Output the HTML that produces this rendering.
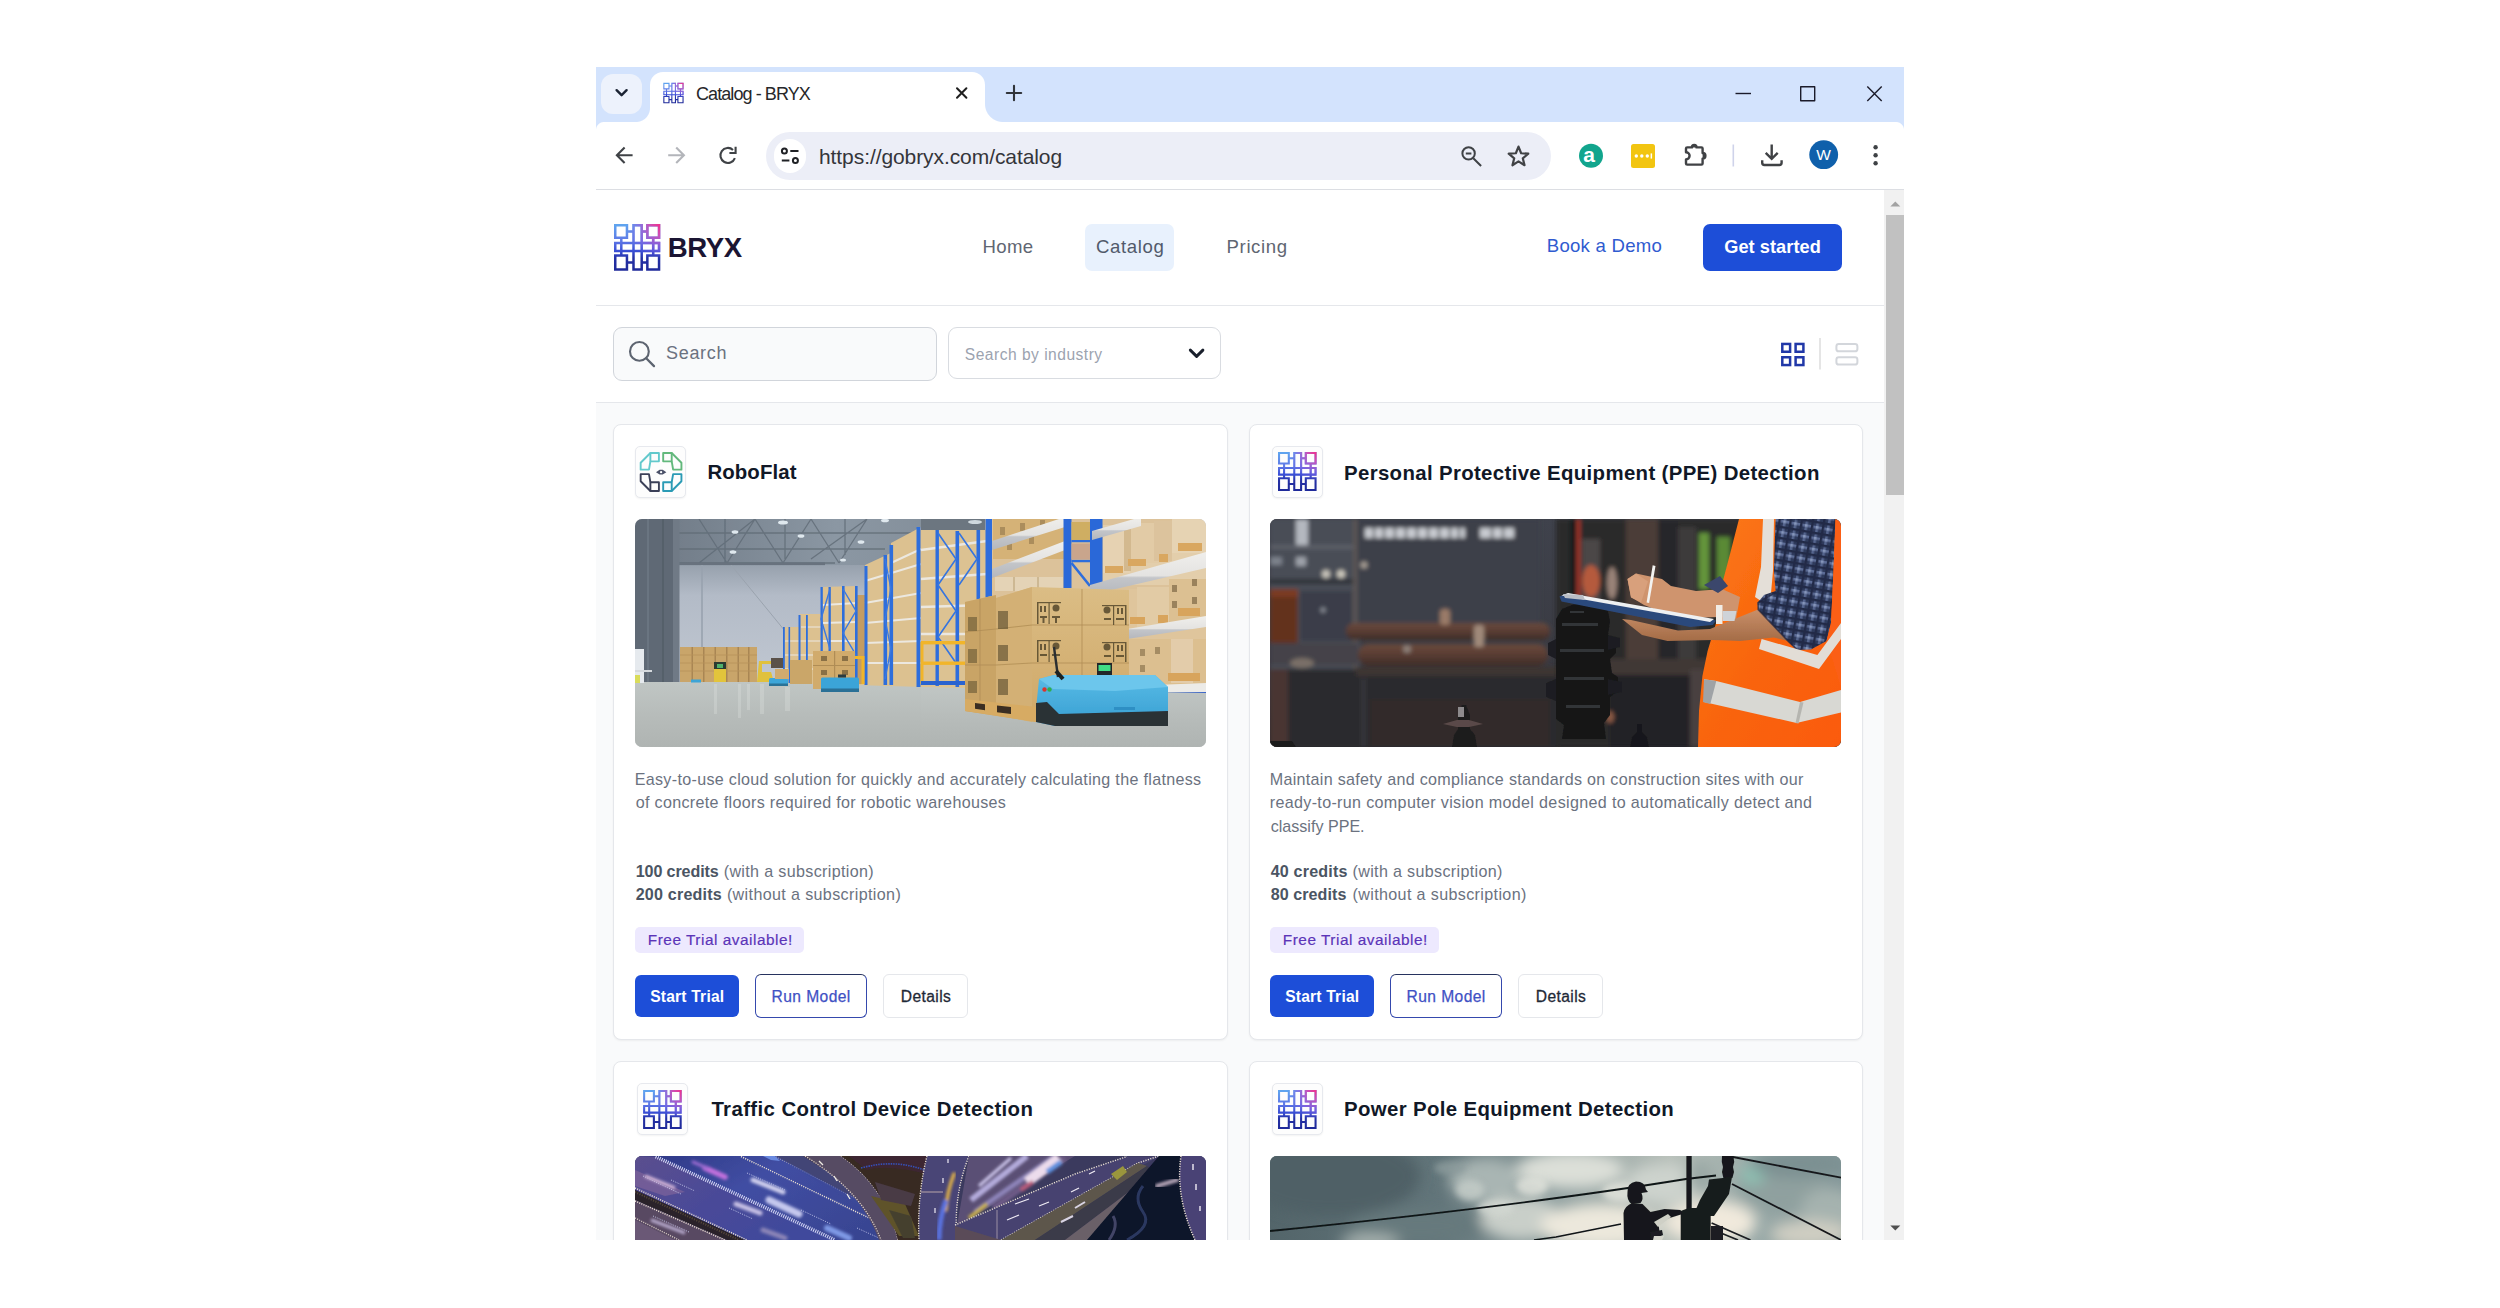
<!DOCTYPE html>
<html lang="en">
<head>
<meta charset="utf-8">
<title>Catalog - BRYX</title>
<style>
*{box-sizing:border-box;margin:0;padding:0}
html,body{width:2500px;height:1308px;background:#fff;overflow:hidden}
body{position:relative;font-family:"Liberation Sans",sans-serif;color:#111827}
.a{position:absolute}
.t{position:absolute;white-space:nowrap;line-height:1}
#win{left:596px;top:67px;width:1308px;height:1173px;overflow:hidden;background:#fff}
/* everything inside #win is positioned in canvas coords via this shifted layer */
#L{left:-596px;top:-67px;width:2500px;height:1308px}
#tabbar{left:596px;top:67px;width:1308px;height:55px;background:#d3e3fd}
#tabsearch{left:601px;top:74px;width:41px;height:40px;border-radius:12px;background:#edf2fc}
#tab{left:650px;top:72px;width:335px;height:50px;background:#fff;border-radius:13px 13px 0 0}
.foot{width:14px;height:14px;top:108px;background:radial-gradient(circle at var(--cx) 0,#d3e3fd 13.5px,#fff 14.5px)}
#toolbar{left:596px;top:122px;width:1308px;height:67px;background:#fff}
#tbline{left:596px;top:189px;width:1308px;height:1px;background:#dcdee3}
#omni{left:766px;top:132px;width:785px;height:48px;border-radius:24px;background:#eceef7}
#siteinfo{left:774px;top:139px;width:32px;height:34px;border-radius:17px;background:#fff}
#page{left:596px;top:190px;width:1288px;height:1050px;background:#f9fafb}
#hdr{left:596px;top:190px;width:1288px;height:115px;background:#fff}
#hdrline{left:596px;top:305px;width:1288px;height:1px;background:#e5e7eb}
#bar{left:596px;top:306px;width:1288px;height:96px;background:#fff}
#barline{left:596px;top:402px;width:1288px;height:1px;background:#e5e7eb}
#sbtrack{left:1884px;top:190px;width:20px;height:1050px;background:#f1f1f1}
#sbthumb{left:1886px;top:215px;width:18px;height:280px;background:#c1c1c1}
.card{position:absolute;background:#fff;border:1px solid #e5e7eb;border-radius:8px;box-shadow:0 1px 2px rgba(0,0,0,.05)}
.ibox{position:absolute;width:51px;height:52px;border:1px solid #e7e9ee;border-radius:5px;background:#fdfdfd;box-shadow:0 1px 2px rgba(0,0,0,.05)}
.ph{position:absolute;width:571px;border-radius:7px;overflow:hidden}
.ph svg{display:block}
.h3{font-weight:700;color:#111827;font-size:20.4px}
.d{color:#6b7280;font-size:16.1px}
.b{font-weight:700;color:#4b5563}
.badge{position:absolute;height:26px;border-radius:5px;background:#ede9fe}
.btn{position:absolute;border-radius:6px}
.nav{font-size:18.6px;color:#5f6672}
</style>
</head>
<body>
<svg width="0" height="0" style="position:absolute">
<defs>
<linearGradient id="mg1" x1="0" y1="0" x2="0" y2="1"><stop offset="0" stop-color="#5fa4ef"/><stop offset=".35" stop-color="#5f78e6"/><stop offset=".58" stop-color="#3a4fd6"/><stop offset=".75" stop-color="#2430a4"/><stop offset="1" stop-color="#1f2a9a"/></linearGradient>
<radialGradient id="mg2" gradientUnits="userSpaceOnUse" cx="46" cy="1" r="34"><stop offset="0" stop-color="#f0308c"/><stop offset=".3" stop-color="#d24bb4" stop-opacity=".95"/><stop offset=".7" stop-color="#8f5fe0" stop-opacity=".55"/><stop offset="1" stop-color="#7060e0" stop-opacity="0"/></radialGradient>
<symbol id="bryxmark" viewBox="0 0 46.3 46.75" overflow="visible">
<path d="M1.25 1.25h11.7v12.6H1.25zM33.35 1.25h11.7v12.6h-11.7zM1.25 31.4h11.7v14.1H1.25zM33.35 31.4h11.7v14.1h-11.7zM19.5 1.25h8.2v44.25h-8.2zM1.25 19.1h43.8v8H1.25zM13 7.4h6.5M27.7 7.4h5.6M13 38.4h6.5M27.7 38.4h5.6M7.3 13.8v5.3M39.2 13.8v5.3M7.3 27.1v4.3M39.2 27.1v4.3M7.3 19.1v8M39.2 19.100v8" fill="none" stroke="url(#mg1)" stroke-width="2.5" stroke-linecap="butt" stroke-linejoin="miter"/>
<path d="M1.25 1.25h11.7v12.6H1.25zM33.35 1.25h11.7v12.6h-11.7zM1.25 31.4h11.7v14.1H1.25zM33.35 31.4h11.7v14.1h-11.7zM19.5 1.25h8.2v44.25h-8.2zM1.25 19.1h43.8v8H1.25zM13 7.4h6.5M27.7 7.4h5.6M13 38.4h6.5M27.7 38.4h5.6M7.3 13.8v5.3M39.2 13.8v5.3M7.3 27.1v4.3M39.2 27.1v4.3M7.3 19.1v8M39.2 19.100v8" fill="none" stroke="url(#mg2)" stroke-width="2.5" stroke-linecap="butt" stroke-linejoin="miter"/>
</symbol>
</defs></svg>
<div id="win" class="a"><div id="L" class="a">

<!-- ===== browser chrome ===== -->
<div id="tabbar" class="a"></div>
<div id="tab" class="a"></div>
<div class="a foot" style="left:636px;--cx:0px"></div>
<div class="a" style="left:985px;top:104px;width:18px;height:18px;background:radial-gradient(circle at 18px 0,#d3e3fd 17.5px,#fff 18.5px)"></div>
<div id="tabsearch" class="a"></div>
<div id="toolbar" class="a"></div>
<div id="tbline" class="a"></div>
<div class="a" style="left:596px;top:122px;width:8px;height:8px;background:radial-gradient(circle at 8px 8px,#fff 7.5px,#d3e3fd 8.5px)"></div>
<div class="a" style="left:1896px;top:122px;width:8px;height:8px;background:radial-gradient(circle at 0 8px,#fff 7.5px,#d3e3fd 8.5px)"></div>
<div id="omni" class="a"></div>
<div id="siteinfo" class="a"></div>
<span id="tx_tab" class="t" style="left:696.00px;top:85.00px;font-size:18px;color:#26272a;letter-spacing:-0.924px">Catalog - BRYX</span>
<span id="tx_url" class="t" style="left:819.00px;top:146.30px;font-size:21px;color:#34353a;letter-spacing:-0.080px">https://gobryx.com/catalog</span>
<svg class="a" style="left:596px;top:67px" width="1308" height="123" viewBox="596 67 1308 123" fill="none" stroke-linecap="round" stroke-linejoin="round">
<defs>
<linearGradient id="lg" x1="0" y1="0" x2="1" y2="1"><stop offset="0" stop-color="#63b8f2"/><stop offset=".33" stop-color="#b14fd0"/><stop offset=".36" stop-color="#7a63e0"/><stop offset=".62" stop-color="#3a55d8"/><stop offset="1" stop-color="#1d2a9c"/></linearGradient>
</defs>
<!-- tab search chevron -->
<path d="M616.6 90.2l5 5 5-5" stroke="#1b2333" stroke-width="2.4"/>
<!-- favicon -->
<use href="#bryxmark" x="663.3" y="82.800" width="20.3" height="20.5"/>
<!-- tab close -->
<path d="M957 88.3l9.4 9.4M966.4 88.3l-9.4 9.4" stroke="#1f1f1f" stroke-width="2"/>
<!-- new tab -->
<path d="M1006.8 93h14.4M1014 85.8v14.4" stroke="#30343a" stroke-width="2.1"/>
<!-- window controls -->
<path d="M1735.5 93.5h15.5" stroke="#1b1b2a" stroke-width="1.4" stroke-linecap="butt"/>
<rect x="1800.7" y="86.7" width="14" height="14" stroke="#1b1b2a" stroke-width="1.4"/>
<path d="M1867.3 86.5l14.4 14.4M1881.7 86.5l-14.4 14.4" stroke="#1b1b2a" stroke-width="1.4" stroke-linecap="butt"/>
<!-- back / forward / reload -->
<path d="M632.6 155.3h-15.4M624.6 147.6l-7.7 7.7 7.7 7.7" stroke="#3f4246" stroke-width="2.1" stroke-linecap="butt" stroke-linejoin="miter"/>
<path d="M668.2 155.3h15.4M676.2 147.6l7.7 7.7-7.7 7.7" stroke="#b3b5ba" stroke-width="2.1" stroke-linecap="butt" stroke-linejoin="miter"/>
<path d="M734.9 158.1a7.5 7.5 0 1 1-1.9-8.2" stroke="#3f4246" stroke-width="2.1" stroke-linecap="butt"/>
<path d="M735.6 146.8v6.2h-6.2" stroke="#3f4246" stroke-width="2.1" stroke-linecap="butt" stroke-linejoin="miter"/>
<!-- tune / site info -->
<circle cx="784.4" cy="151.1" r="2.5" stroke="#1f2125" stroke-width="2"/>
<path d="M790.3 151.1h8.2M781.8 160.5h7.6" stroke="#1f2125" stroke-width="2" stroke-linecap="butt"/>
<circle cx="795.4" cy="160.5" r="2.5" stroke="#1f2125" stroke-width="2"/>
<!-- zoom-out -->
<circle cx="1468.6" cy="153.4" r="6.2" stroke="#3f4246" stroke-width="2"/>
<path d="M1465.8 153.4h5.6M1473.3 158.2l7.8 7.8" stroke="#3f4246" stroke-width="2" stroke-linecap="butt"/>
<!-- star -->
<path d="M1518.50 146.60L1521.15 153.26L1528.30 153.72L1522.78 158.29L1524.55 165.23L1518.50 161.40L1512.45 165.23L1514.22 158.29L1508.70 153.72L1515.85 153.26Z" stroke="#404245" stroke-width="2.2" stroke-linejoin="round"/>
<!-- green a -->
<circle cx="1591" cy="155.8" r="12" fill="#12a58d"/>
<!-- yellow box -->
<rect x="1631" y="144" width="24" height="24" rx="2.5" fill="#f2c511"/>
<circle cx="1636.3" cy="156" r="1.7" fill="#fff"/><circle cx="1641.8" cy="156" r="1.7" fill="#fff"/><circle cx="1647.3" cy="156" r="1.7" fill="#fff"/><rect x="1650.6" y="153.4" width="1.5" height="5.2" fill="#fff"/>
<!-- puzzle -->
<path d="M1687.2 147.4H1691.9A2.300 2.500 0 0 1 1696.5 147.4H1701.4a1.200 1.200 0 0 1 1.200 1.200V153A2.800 2.800 0 0 1 1702.6 158.600V163.400a1.200 1.200 0 0 1-1.200 1.200H1687.2a1.200 1.200 0 0 1-1.200-1.200V159.400A3.600 3.600 0 0 0 1686 152.200V148.600a1.200 1.200 0 0 1 1.200-1.200z" stroke="#404245" stroke-width="2.400" stroke-linejoin="round"/>
<path d="M1691.900 147.400A2.300 2.500 0 0 1 1696.500 147.400zM1702.600 153A2.800 2.800 0 0 1 1702.600 158.600z" fill="#404245" stroke="none"/>
<!-- separator -->
<path d="M1733.3 144.5v22" stroke="#cfd3ea" stroke-width="1.6" stroke-linecap="butt"/>
<!-- download -->
<path d="M1771.7 144.4v14.2M1765.700 152.800l6 6 6-6" stroke="#404245" stroke-width="2.4" stroke-linecap="butt" stroke-linejoin="miter"/>
<path d="M1762.2 160.200v2.600a2.200 2.200 0 0 0 2.200 2.200h15a2.200 2.200 0 0 0 2.200-2.200v-2.600" stroke="#404245" stroke-width="2.4" stroke-linecap="butt"/>
<!-- avatar -->
<circle cx="1823.7" cy="154.7" r="14.4" fill="#0f60ab"/>
<!-- menu -->
<circle cx="1875.6" cy="147.2" r="2.2" fill="#3f4246"/><circle cx="1875.6" cy="155.2" r="2.2" fill="#3f4246"/><circle cx="1875.6" cy="163.300" r="2.2" fill="#3f4246"/>
</svg>
<span class="t" style="left:1583.2px;top:143.5px;font-size:21px;font-weight:700;color:#fff">a</span>
<span class="t" style="left:1816.3px;top:146.6px;font-size:15.5px;color:#fff">W</span>

<!-- ===== page ===== -->
<div id="page" class="a"></div>
<div id="hdr" class="a"></div>
<div id="hdrline" class="a"></div>
<div id="bar" class="a"></div>
<div id="barline" class="a"></div>
<div id="sbtrack" class="a"></div>
<div id="sbthumb" class="a"></div>
<svg class="a" style="left:1884px;top:190px" width="20" height="1050" viewBox="1884 190 20 1050">
<path d="M1890.300 206.500l5-5 5 5z" fill="#a3a3a3"/>
<path d="M1890.300 1225.500l5 5 5-5z" fill="#505050"/>
</svg>

<!-- header -->
<svg class="a" style="left:614px;top:224px;overflow:visible" width="46.3" height="46.75"><use href="#bryxmark" width="46.3" height="46.75"/></svg>
<span id="tx_bryx" class="t" style="left:667.80px;top:234.21px;font-size:27.6px;font-weight:700;color:#1b1533;letter-spacing:-0.400px">BRYX</span>
<span id="tx_home" class="t nav" style="left:982.60px;top:237.91px;letter-spacing:0.334px">Home</span>
<div class="a" style="left:1085px;top:224px;width:89px;height:47px;border-radius:7px;background:#e8f1fd"></div>
<span id="tx_cat" class="t nav" style="left:1096.00px;top:237.91px;color:#515a6b;letter-spacing:0.633px">Catalog</span>
<span id="tx_pri" class="t nav" style="left:1226.60px;top:237.91px;letter-spacing:0.601px">Pricing</span>
<span id="tx_demo" class="t" style="left:1546.80px;top:237.11px;font-size:18.6px;color:#2f5bd0;letter-spacing:0.240px">Book a Demo</span>
<div class="a" style="left:1703px;top:224px;width:139px;height:47px;border-radius:7px;background:#1d4ed8"></div>
<span id="tx_get" class="t" style="left:1724.20px;top:237.50px;font-size:18.2px;font-weight:700;color:#fff;letter-spacing:0.060px">Get started</span>

<!-- search bar -->
<div class="a" style="left:613px;top:327px;width:324px;height:54px;border-radius:9px;border:1px solid #d1d5db;background:#f9fafb"></div>
<span id="tx_search" class="t" style="left:666.00px;top:344.11px;font-size:18px;color:#6b7280;letter-spacing:0.680px">Search</span>
<div class="a" style="left:948px;top:327px;width:273px;height:52px;border-radius:9px;border:1px solid #d9dce1;background:#fff"></div>
<span id="tx_ind" class="t" style="left:964.80px;top:346.50px;font-size:15.6px;color:#9ca3af;letter-spacing:0.483px">Search by industry</span>
<svg class="a" style="left:596px;top:306px" width="1288" height="96" viewBox="596 306 1288 96" fill="none">
<circle cx="639.4" cy="351.4" r="9.4" stroke="#5d6470" stroke-width="2.1"/>
<path d="M646.2 358.2l7.800 7.900" stroke="#5d6470" stroke-width="2.3" stroke-linecap="round"/>
<path d="M1190.300 350.100l6.300 6.300 6.300-6.300" stroke="#1a202c" stroke-width="2.900" stroke-linecap="round" stroke-linejoin="round"/>
<g stroke="#2138a8" stroke-width="2.5">
<rect x="1782.3" y="343.95" width="7.800" height="7.800"/><rect x="1795.600" y="343.950" width="7.800" height="7.800"/>
<rect x="1782.300" y="357.250" width="7.800" height="7.800"/><rect x="1795.600" y="357.250" width="7.800" height="7.800"/>
</g>
<path d="M1820 338v31.500" stroke="#e3e3e3" stroke-width="1.800"/>
<rect x="1836.400" y="344.100" width="21" height="7.200" rx="2.400" stroke="#d3d6db" stroke-width="2"/>
<rect x="1836.400" y="357.300" width="21" height="7.300" rx="2.400" stroke="#d3d6db" stroke-width="2"/>
</svg>


<!-- ===== cards ===== -->
<div class="card" style="left:613px;top:424px;width:615px;height:616px"></div>
<div class="card" style="left:1249px;top:424px;width:614px;height:616px"></div>
<div class="card" style="left:613px;top:1061px;width:615px;height:616px"></div>
<div class="card" style="left:1249px;top:1061px;width:614px;height:616px"></div>

<div class="ibox" style="left:635px;top:446px"></div>
<div class="ibox" style="left:1272px;top:446px"></div>
<div class="ibox" style="left:637px;top:1083px"></div>
<div class="ibox" style="left:1272px;top:1083px"></div>
<svg class="a" style="left:630px;top:440px;overflow:visible" width="62" height="62" viewBox="0 0 1308 1308" fill="none" stroke-width="40" stroke-linejoin="round">
<defs><linearGradient id="rg1" x1="0" y1="0" x2="1" y2="0"><stop offset="0" stop-color="#69cfd0"/><stop offset="1" stop-color="#52bcc6"/></linearGradient></defs>
<g stroke="#62c9cc"><path d="M430 275H610V450H430Z"/><path d="M430 275L225 480V625H400L430 450"/></g>
<g stroke="#62b87c"><path d="M700 275H880V450H700Z"/><path d="M880 275L1085 480V625H910L880 450"/></g>
<g stroke="#3b4058"><path d="M430 890H610V1075H430Z"/><path d="M430 1075L225 870V720H400L430 890"/></g>
<g stroke="#2b9bb5"><path d="M700 890H880V1075H700Z"/><path d="M880 1075L1085 870V720H910L880 890"/></g>
<path d="M548 678L625 626H690L768 678L690 730H625Z" fill="#4a5068" stroke="none"/><circle cx="656" cy="678" r="24" fill="#fff" stroke="none"/>
</svg>
<svg class="a" style="left:1278.2px;top:452.4px;overflow:visible" width="38.6" height="39"><use href="#bryxmark" width="38.6" height="39"/></svg>
<svg class="a" style="left:642.8px;top:1089.8px;overflow:visible" width="38.8" height="39"><use href="#bryxmark" width="38.800" height="39"/></svg>
<svg class="a" style="left:1278.2px;top:1089.8px;overflow:visible" width="38.6" height="39"><use href="#bryxmark" width="38.600" height="39"/></svg>

<span id="tx_t1" class="t h3" style="left:707.40px;top:462.41px;letter-spacing:0.112px">RoboFlat</span>
<span id="tx_t2" class="t h3" style="left:1344.00px;top:462.50px;letter-spacing:0.349px">Personal Protective Equipment (PPE) Detection</span>
<span id="tx_t3" class="t h3" style="left:711.40px;top:1099.21px;letter-spacing:0.394px">Traffic Control Device Detection</span>
<span id="tx_t4" class="t h3" style="left:1344.00px;top:1099.21px;letter-spacing:0.352px">Power Pole Equipment Detection</span>

<div id="ph1" class="ph" style="left:635px;top:519px;height:228px;background:#b9bec0"><svg width="571" height="228" viewBox="0 0 571 228" preserveAspectRatio="none">
<defs>
<linearGradient id="p1fl" x1="0" y1="0" x2="0" y2="1"><stop offset="0" stop-color="#c0c6c4"/><stop offset=".5" stop-color="#b7bcba"/><stop offset="1" stop-color="#afb4b2"/></linearGradient>
<linearGradient id="p1wl" x1="0" y1="0" x2="0" y2="1"><stop offset="0" stop-color="#97a1ad"/><stop offset=".25" stop-color="#b3bbc7"/><stop offset="1" stop-color="#c1c8d2"/></linearGradient>
<linearGradient id="p1cl" x1="0" y1="0" x2="1" y2="0"><stop offset="0" stop-color="#727d89"/><stop offset=".5" stop-color="#8b97a3"/><stop offset="1" stop-color="#7f8a95"/></linearGradient>
<linearGradient id="p1bx" x1="0" y1="0" x2="0" y2="1"><stop offset="0" stop-color="#dbbd85"/><stop offset="1" stop-color="#cfa868"/></linearGradient>
<linearGradient id="p1rb" x1="0" y1="0" x2="0" y2="1"><stop offset="0" stop-color="#59bbe6"/><stop offset="1" stop-color="#379fd2"/></linearGradient>
<linearGradient id="p1sh" x1="0" y1="0" x2="0" y2="1"><stop offset="0" stop-color="#f0efec"/><stop offset=".55" stop-color="#e4e3e1"/><stop offset=".6" stop-color="#c3c5c9"/><stop offset="1" stop-color="#b4b7bd"/></linearGradient>
<filter id="p1b"><feGaussianBlur stdDeviation=".6"/></filter>
</defs>
<g filter="url(#p1b)">
<rect width="571" height="228" fill="#b9c0ca"/>
<!-- ceiling -->
<rect x="36" y="0" width="330" height="47" fill="url(#p1cl)"/>
<g stroke="#5f6a76" stroke-width="1.3" fill="none" opacity=".8">
<path d="M44 14H290M44 30H250M44 44H200M64 0L92 44M92 44L120 0M120 0L148 44M148 44L176 0M176 0L204 44M204 44L232 0M90 0V44M150 0V40M210 0V36M120 0L64 44M232 0L176 40"/>
</g>
<g fill="#dfe8ee"><ellipse cx="100" cy="13" rx="3.4" ry="1.8"/><ellipse cx="98" cy="33" rx="3.4" ry="1.8"/><ellipse cx="148" cy="3.500" rx="5" ry="2"/><ellipse cx="166" cy="17" rx="3.400" ry="1.800"/><ellipse cx="208" cy="41" rx="3" ry="1.600"/><ellipse cx="226" cy="23" rx="3.400" ry="1.800"/><ellipse cx="250" cy="1.500" rx="4" ry="1.800"/></g>
<!-- back wall -->
<rect x="44" y="46" width="190" height="122" fill="url(#p1wl)"/>
<rect x="44" y="43.5" width="146" height="2.6" fill="#67727e"/>
<rect x="66.200" y="46" width="1.600" height="118" fill="#98a2ae"/>
<path d="M96 46L150 112" stroke="#9aa3ae" stroke-width="1" fill="none"/>
<!-- pillar -->
<rect x="0" y="0" width="38" height="166" fill="#5f6975"/>
<rect x="12" y="0" width="2" height="166" fill="#6b7581"/><rect x="27" y="0" width="2" height="166" fill="#55606b"/>
<rect x="38" y="0" width="6.500" height="166" fill="#707a86"/>
<!-- floor -->
<path d="M0 163H150L571 170V228H0Z" fill="url(#p1fl)"/>
<g fill="#dfe3e0" opacity=".32"><rect x="79" y="165" width="3" height="30"/><rect x="103" y="165" width="3" height="34"/><rect x="112" y="165" width="3" height="26"/><rect x="125" y="165" width="4" height="30"/><rect x="150" y="168" width="5" height="24"/></g>
<!-- white object far left -->
<rect x="0" y="130" width="9" height="34" fill="#e6eaee"/><rect x="0" y="151" width="17" height="2" fill="#d6dade"/><rect x="0" y="156" width="5" height="8" fill="#d9dc5a"/>
<!-- back boxes -->
<rect x="45" y="128" width="77" height="35" fill="#c9a56a"/>
<g fill="#a98652"><rect x="56.500" y="128" width="1.500" height="35"/><rect x="68" y="128" width="1.500" height="35"/><rect x="79.500" y="128" width="1.500" height="35"/><rect x="91" y="128" width="1.500" height="35"/><rect x="102.500" y="128" width="1.500" height="35"/><rect x="113" y="128" width="1.500" height="35"/></g>
<g stroke="#b8935a" stroke-width=".8"><path d="M45 136H122M45 144H122M45 152H122"/></g>
<!-- forklifts -->
<rect x="79" y="143" width="12" height="8" fill="#2c3a32"/><rect x="79" y="150" width="12" height="13" fill="#e2c43a"/><rect x="82" y="145" width="6" height="4" fill="#4fb06a"/>
<path d="M124 142h12v3h-9v8h9l3 10h-17z" fill="#e0c13c"/><rect x="136" y="139" width="14" height="10" fill="#5a5148"/>
<rect x="56" y="160.500" width="10" height="3" fill="#3da4d6"/>
<!-- rack wedge -->
<path d="M148 108L165 108 165 95 187 95 187 68 222 67 222 76 230 76 230 46 256 34 256 24 286 8 360 0 360 170 148 164Z" fill="#dcc190"/>
<path d="M222 76h8V165h-8z" fill="#c39c63"/>
<!-- shelf lines (light) in far racks -->
<g stroke="#ece8e0" stroke-width="2" fill="none"><path d="M230 62L286 45M230 84L286 74M230 104L286 99M230 124L286 122M230 144L286 144M188 86L222 84M188 104L222 103M188 122L222 122M188 140L222 140M256 44L286 30"/></g>
<g stroke="#ece8e0" stroke-width="1.200" fill="none"><path d="M150 122H186M150 136H186M150 150H186M166 108H186"/></g>
<!-- blue uprights far -->
<g fill="#2f6edb"><rect x="148" y="108" width="1.800" height="56"/><rect x="153.500" y="108" width="1.600" height="56"/><rect x="163.500" y="96" width="2" height="68"/><rect x="171" y="96" width="1.800" height="68"/><rect x="185.500" y="68" width="2.300" height="97"/><rect x="193.500" y="68" width="2.300" height="97"/><rect x="207" y="67" width="2.600" height="98"/><rect x="220" y="67" width="2.600" height="98"/><rect x="229.500" y="47" width="3" height="119"/><rect x="248.500" y="36" width="3.600" height="130"/><rect x="254.500" y="26" width="3.600" height="140"/><rect x="281.500" y="8" width="4" height="160"/></g>
<g stroke="#3a78e0" stroke-width="1.400" fill="none"><path d="M208 70L221 92L208 114L221 136L208 158M195 70L186 100L195 130M250 40L256 70L250 100L256 130L250 160"/></g>
<!-- mid racks right of 286 -->
<rect x="286" y="0" width="75" height="170" fill="#dcc292"/>
<g stroke="#ebe7df" stroke-width="2.400" fill="none"><path d="M286 31L352 22M286 60L352 55M286 88L352 86M286 115L352 115"/></g>
<g fill="#2d6ddc"><rect x="300.500" y="9" width="3.400" height="158"/><rect x="320.500" y="12" width="3.600" height="156"/><rect x="341.500" y="8" width="3.600" height="74"/><rect x="350.500" y="0" width="7" height="80"/></g>
<g stroke="#3574e0" stroke-width="1.600" fill="none"><path d="M303 14L321 40L303 66L321 92L303 118L321 144M324 14L342 40L324 66"/></g>
<rect x="286" y="0" width="64" height="11" fill="#6c7680"/><ellipse cx="340" cy="3" rx="7" ry="2" fill="#cfd8de"/>
<!-- yellow barrier -->
<g fill="#f1b52b"><rect x="286" y="122" width="45" height="3.400"/><rect x="286" y="142.500" width="45" height="3.400"/></g><path d="M287 123v42" stroke="#f1b52b" stroke-width="3"/>
<rect x="286" y="162" width="46" height="4" fill="#2b63cf"/>
<!-- right shelves region -->
<rect x="357" y="0" width="214" height="172" fill="#dcc29a"/>
<!-- top-left boxes (behind) -->
<rect x="358" y="0" width="72" height="40" fill="#d5b277"/>
<g fill="#8a6f45" opacity=".55"><rect x="365" y="8" width="5" height="8"/><rect x="385" y="4" width="5" height="8"/><rect x="405" y="1" width="5" height="8"/><rect x="372" y="24" width="5" height="7"/><rect x="394" y="18" width="5" height="7"/></g>
<path d="M357 22L430 -2V8L357 31Z" fill="url(#p1sh)"/>
<path d="M357 50L430 22V31L357 59Z" fill="url(#p1sh)"/>
<rect x="360" y="58" width="68" height="14" fill="#e4d3b6"/><rect x="378" y="58" width="2" height="14" fill="#cdb893"/><rect x="402" y="58" width="2" height="14" fill="#cdb893"/>
<!-- blue big uprights -->
<path d="M428.500 0h8v69h-8zM455 0h12.500v69H455z" fill="#2b68d8"/>
<path d="M436.500 22H455M436.500 42H455M436.500 44L455 67" stroke="#2f6edc" stroke-width="2.600" fill="none"/>
<rect x="436.500" y="24.500" width="18.500" height="16" fill="#c9a58c"/><rect x="436.500" y="3" width="18.500" height="18" fill="#cfae62"/>
<!-- right boxes upper -->
<rect x="468" y="6" width="103" height="60" fill="#e3ceab"/>
<rect x="468" y="12" width="27" height="42" fill="#e6d2b2"/><rect x="495" y="4" width="42" height="40" fill="#e2cba6"/><rect x="537" y="0" width="34" height="34" fill="#e6d3b3"/>
<rect x="489" y="10" width="7" height="42" fill="#d3b98f"/><rect x="519" y="2" width="18" height="40" fill="#dcc39d"/>
<g fill="#d9a760"><rect x="470" y="47" width="18" height="7"/><rect x="493" y="40" width="18" height="7"/><rect x="524" y="35" width="9" height="8"/><rect x="543" y="24" width="24" height="8"/></g>
<path d="M457 12L506 -2V7L457 21Z" fill="url(#p1sh)"/>
<path d="M455 66L571 33V49L455 76Z" fill="url(#p1sh)"/>
<!-- right boxes lower -->
<rect x="494" y="70" width="77" height="100" fill="#dfc59c"/>
<rect x="502" y="68" width="32" height="44" fill="#e2cba5"/><rect x="534" y="60" width="37" height="46" fill="#dcc092"/>
<g fill="#6f5a38" opacity=".6"><rect x="537" y="66" width="5" height="7"/><rect x="557" y="60" width="5" height="7"/><rect x="537" y="82" width="5" height="7"/><rect x="557" y="78" width="5" height="7"/></g>
<g fill="#d8a45c"><rect x="495" y="98" width="15" height="7"/><rect x="523" y="96" width="10" height="8"/><rect x="543" y="89" width="22" height="8"/></g>
<path d="M492 110L571 97V108L492 120Z" fill="url(#p1sh)"/>
<rect x="494" y="120" width="77" height="48" fill="#dcbf90"/>
<rect x="536" y="120" width="22" height="44" fill="#e3ccaa"/>
<g fill="#6f5a38" opacity=".5"><rect x="505" y="130" width="5" height="7"/><rect x="520" y="128" width="5" height="7"/><rect x="505" y="146" width="5" height="7"/></g>
<g fill="#d8a45c"><rect x="533" y="154" width="32" height="8"/></g>
<path d="M520 166L571 164V176L520 173Z" fill="#ecebe8"/>
<rect x="523" y="173" width="48" height="5" fill="#3a64c8"/>
<!-- floor right -->
<path d="M286 168L571 174V228H286Z" fill="url(#p1fl)"/>
<!-- front box stack -->
<path d="M330 83L361 76 361 79 397 68 494 71 494 196 401 203 330 192Z" fill="url(#p1bx)"/>
<path d="M330 83L361 76V196L330 192Z" fill="#c9a466"/>
<path d="M361 79L397 68V203L361 196Z" fill="#d3b074"/>
<g stroke="#b08d55" stroke-width="1" fill="none" opacity=".8"><path d="M330 113L361 110L397 106H494M330 146L361 146L397 144H494M447 70V178M345 80V194"/></g>
<!-- box symbols -->
<g fill="#4d4227" opacity=".8"><rect x="402" y="83" width="1.500" height="22"/><rect x="402" y="83" width="24" height="1.200"/><rect x="413.500" y="83" width="1.200" height="22"/><rect x="405" y="87" width="2" height="6"/><rect x="409" y="87" width="2" height="6"/><rect x="405" y="97" width="7" height="2"/><rect x="407.500" y="99" width="2" height="5"/><circle cx="421" cy="89" r="3.500"/><rect x="417" y="97" width="8" height="2"/><rect x="420" y="99" width="2" height="5"/>
<rect x="467" y="86" width="24" height="1.200"/><rect x="478" y="86" width="1.200" height="20"/><rect x="490" y="86" width="1.500" height="20"/><circle cx="472" cy="91" r="3.500"/><rect x="482" y="89" width="2" height="6"/><rect x="486" y="89" width="2" height="6"/><rect x="469" y="99" width="7" height="2"/><rect x="481" y="99" width="8" height="2"/>
<rect x="402" y="121" width="1.500" height="22"/><rect x="402" y="121" width="24" height="1.200"/><rect x="413.500" y="121" width="1.200" height="22"/><rect x="405" y="125" width="2" height="6"/><rect x="409" y="125" width="2" height="6"/><rect x="405" y="135" width="7" height="2"/><circle cx="421" cy="127" r="3.500"/><rect x="417" y="135" width="8" height="2"/>
<rect x="467" y="123" width="24" height="1.200"/><rect x="478" y="123" width="1.200" height="20"/><rect x="490" y="123" width="1.500" height="20"/><circle cx="472" cy="128" r="3.500"/><rect x="482" y="126" width="2" height="6"/><rect x="486" y="126" width="2" height="6"/><rect x="469" y="136" width="7" height="2"/><rect x="481" y="136" width="8" height="2"/>
<rect x="363" y="92" width="10" height="18" opacity=".7"/><rect x="333" y="98" width="9" height="14" opacity=".6"/><rect x="363" y="126" width="10" height="16" opacity=".7"/><rect x="333" y="130" width="9" height="14" opacity=".6"/><rect x="363" y="160" width="10" height="16" opacity=".7"/><rect x="333" y="162" width="9" height="12" opacity=".6"/></g>
<!-- pallet -->
<path d="M330 180L401 188V203L330 192Z" fill="#d7ab63"/>
<g fill="#3a2f20"><path d="M340 184l10 1.200v6l-10-1.400zM362 186.500l14 1.600v7l-14-1.800z"/></g>
<!-- robot -->
<path d="M401 203V190L404 160 419 156 520 156 533 168 533 207 420 207Z" fill="url(#p1rb)"/>
<path d="M404 160L419 156H520L533 168L480 172 418 170Z" fill="#6cc6ec"/>
<path d="M401 184L412 183 424 195 533 192V207H420L401 203Z" fill="#2b3036"/>
<rect x="479" y="188" width="21" height="3" fill="#2d8fc4"/>
<rect x="462" y="144" width="15" height="12" fill="#23282b"/><rect x="463.500" y="146" width="12" height="6" fill="#3fdc86"/>
<path d="M419 128L423 158" stroke="#2a2d30" stroke-width="2.400"/><path d="M421 152l7 8" stroke="#1d2023" stroke-width="4"/>
<circle cx="409.500" cy="170.500" r="2.200" fill="#d8362f"/><circle cx="414.500" cy="170.500" r="2.200" fill="#2fae4d"/>
<!-- second (mid) robot + boxes in left half -->
<rect x="178" y="132" width="42" height="38" fill="#d1ab6c"/><rect x="199" y="132" width="1.200" height="30" fill="#b08d55"/><rect x="178" y="146" width="42" height="1" fill="#b08d55"/>
<g fill="#5b4a2a" opacity=".6"><rect x="186" y="137" width="6" height="5"/><rect x="207" y="137" width="6" height="5"/><rect x="186" y="151" width="6" height="5"/><rect x="207" y="151" width="6" height="5"/></g>
<rect x="220" y="137" width="9" height="3" fill="#f0b52c"/><rect x="226.500" y="137" width="3" height="28" fill="#f0b52c"/>
<rect x="186" y="158.500" width="38" height="13" rx="1.500" fill="#3ba4d8"/><rect x="186" y="169.500" width="38" height="3.500" fill="#2a6f96"/><rect x="203" y="155.500" width="8" height="3" fill="#2c3a40"/>
<rect x="134" y="159" width="19" height="7" rx="1.500" fill="#3da6d9"/><rect x="134" y="164.500" width="19" height="2.500" fill="#2b7297"/>
<rect x="155" y="141" width="22" height="24" fill="#caa669"/><rect x="140" y="150" width="14" height="10" fill="#d0ab6e"/>
</g>
</svg></div>
<div id="ph2" class="ph" style="left:1270px;top:519px;height:228px;background:#3a3a40"><svg width="571" height="228" viewBox="0 0 571 228" preserveAspectRatio="none">
<defs>
<linearGradient id="p2bg" x1="0" y1="0" x2="0" y2="1"><stop offset="0" stop-color="#3f424c"/><stop offset=".6" stop-color="#3a3b43"/><stop offset="1" stop-color="#2b2a2c"/></linearGradient>
<linearGradient id="p2pipe" x1="0" y1="0" x2="0" y2="1"><stop offset="0" stop-color="#6b4a3d"/><stop offset=".45" stop-color="#5b3e34"/><stop offset="1" stop-color="#3d2c28"/></linearGradient>
<linearGradient id="p2vest" x1="0" y1="0" x2="1" y2="1"><stop offset="0" stop-color="#fb7a17"/><stop offset=".5" stop-color="#f9650e"/><stop offset="1" stop-color="#fb5a10"/></linearGradient>
<linearGradient id="p2skin" x1="0" y1="0" x2="0" y2="1"><stop offset="0" stop-color="#c98f69"/><stop offset="1" stop-color="#a46c47"/></linearGradient>
<pattern id="p2plaid" width="11" height="11" patternUnits="userSpaceOnUse" patternTransform="rotate(10)"><rect width="11" height="11" fill="#2f3a5c"/><rect width="11" height="2.600" fill="#5d6d97"/><rect width="2.600" height="11" fill="#56668f"/><rect width="2.600" height="2.600" fill="#8696ba"/><rect x="6" width="2.400" height="11" fill="#222a47"/><rect y="6" width="11" height="2.400" fill="#222a47"/></pattern>
<filter id="p2b1"><feGaussianBlur stdDeviation="2.200"/></filter>
<filter id="p2b2"><feGaussianBlur stdDeviation=".7"/></filter>
<filter id="p2b3"><feGaussianBlur stdDeviation="4"/></filter>
</defs>
<rect width="571" height="228" fill="url(#p2bg)"/>
<!-- blurred machinery background -->
<g filter="url(#p2b1)">
<rect x="0" y="0" width="90" height="150" fill="#4a4d57"/>
<rect x="88" y="0" width="182" height="104" fill="#3c3f49"/>
<rect x="26" y="0" width="12" height="26" fill="#b4b8bf"/>
<rect x="0" y="26" width="86" height="4" fill="#5d6069"/><rect x="0" y="60" width="86" height="5" fill="#2e3037"/>
<rect x="0" y="38" width="12" height="8" fill="#7d828c"/><rect x="26" y="38" width="10" height="9" fill="#9ea2aa"/>
<circle cx="56" cy="55" r="4" fill="#c9c5bb"/><circle cx="71" cy="55" r="4" fill="#cfcbbf"/><circle cx="94" cy="46" r="3.500" fill="#a59c93"/>
<rect x="0" y="70" width="28" height="54" fill="#64301f"/><rect x="0" y="70" width="28" height="8" fill="#7b3a24"/>
<rect x="30" y="72" width="52" height="50" fill="#3b3e49"/><circle cx="53" cy="91" r="2.500" fill="#8e939c"/>
<rect x="83" y="0" width="4" height="150" fill="#5c5553"/>
<!-- blurry white text -->
<g fill="#c8cbd0"><rect x="95" y="9" width="100" height="10"/><rect x="210" y="9" width="34" height="10"/></g>
<g fill="#3c3f49"><rect x="103" y="8" width="2" height="12"/><rect x="113" y="8" width="2" height="12"/><rect x="124" y="8" width="2" height="12"/><rect x="135" y="8" width="2" height="12"/><rect x="146" y="8" width="2" height="12"/><rect x="157" y="8" width="2" height="12"/><rect x="168" y="8" width="2" height="12"/><rect x="179" y="8" width="2" height="12"/><rect x="188" y="8" width="2" height="12"/><rect x="221" y="8" width="2" height="12"/><rect x="232" y="8" width="2" height="12"/></g>
<!-- pipes -->
<rect x="76" y="104" width="204" height="17" rx="8" fill="url(#p2pipe)"/>
<rect x="88" y="125" width="190" height="22" rx="10" fill="url(#p2pipe)"/>
<rect x="170" y="90" width="10" height="16" rx="3" fill="#9a7a68"/><rect x="204" y="106" width="10" height="22" rx="3" fill="#a08a7a"/><circle cx="137" cy="130" r="4" fill="#8d8078"/>
<rect x="0" y="124" width="88" height="22" fill="#45434a"/><ellipse cx="32" cy="144" rx="12" ry="5" fill="#7a7067"/>
<!-- lower dark slab -->
<rect x="18" y="150" width="270" height="80" fill="#2c2b2e"/><rect x="86" y="148" width="200" height="9" fill="#3d3431"/>
<rect x="0" y="150" width="18" height="78" fill="#4a3430"/>
<rect x="92" y="160" width="3" height="68" fill="#3a3a40"/>
<rect x="100" y="180" width="180" height="48" fill="#33292a" opacity=".7"/>
<!-- right background pillars -->
<rect x="286" y="0" width="190" height="228" fill="#2c2a2b"/>
<rect x="300" y="0" width="8" height="80" fill="#191a1c"/><rect x="307" y="0" width="3" height="80" fill="#b0382a"/>
<rect x="312" y="20" width="18" height="70" fill="#4c4747"/><ellipse cx="321" cy="62" rx="9" ry="16" fill="#b55a3c"/><ellipse cx="342" cy="64" rx="5" ry="16" fill="#9a8378"/>
<rect x="356" y="0" width="32" height="228" fill="#4b3d39"/>
<rect x="388" y="0" width="20" height="140" fill="#27282c"/>
<rect x="408" y="8" width="18" height="132" fill="#3d3a3b"/>
<rect x="429" y="14" width="11" height="56" fill="#64943a"/><rect x="447" y="18" width="13" height="50" fill="#5a8a34"/>
<rect x="439" y="0" width="8" height="130" fill="#2a2a2c"/>
<rect x="330" y="140" width="110" height="16" fill="#3f3836"/><rect x="340" y="156" width="90" height="72" fill="#242325"/><rect x="420" y="150" width="14" height="78" fill="#4a4140"/>
<ellipse cx="340" cy="198" rx="4" ry="6" fill="#8a5a44"/>
</g>
<!-- small valve bottom-center-left -->
<g filter="url(#p2b2)">
<path d="M182 228l2-12 4-6v-14l4-10h4l4 10v14l5 6 2 12z" fill="#1b1b1e"/>
<path d="M173 205l14-4h12l14 4-14 3h-12z" fill="#5a4a48"/><rect x="188" y="188" width="6" height="10" fill="#8d8a8c"/>
<path d="M0 222h22l4 6H0z" fill="#1a1a1c"/>
</g>
<!-- big black valve -->
<g filter="url(#p2b2)">
<path d="M286 100l6-10 10-4 16-3 12 3 8 6 2 10-2 14 8 6v12l-6 6 2 14 6 4v14l-8 6v18l-6 8 2 16H292l2-14-8-6z" fill="#141518"/>
<path d="M278 124l8-4v20l-8-4zM276 164l10-4v22l-10-4zM338 116l12 3v9l-12 3zM338 160l14 3v10l-14 3z" fill="#1b1c20"/>
<g fill="#3a3c42" opacity=".8"><rect x="292" y="104" width="36" height="3"/><rect x="290" y="130" width="44" height="3"/><rect x="294" y="158" width="40" height="3"/><rect x="296" y="186" width="34" height="3"/><rect x="300" y="92" width="14" height="2"/></g>
<path d="M360 228l2-10 5-5v-8h5v8l5 5 2 10z" fill="#17181a"/>
</g>
<!-- person -->
<g filter="url(#p2b2)">
<path d="M469 0H571V228H428L429 192 432.400 157 437.600 132 448 97.600 450 73 460 35Z" fill="url(#p2vest)"/>
<path d="M493 0h11l-1 52-2 22-10 8-6-4 6-30z" fill="#e4dfd8"/>
<!-- upper arm + hand (writing) -->
<path d="M357.500 60L366 54.500 392 60 401 67 426 72 452 70 470 78 466 100 450 98 420 99 392 93 374 86 361 78Z" fill="#cf946e"/>
<path d="M357.500 60l8.500-5.500 12 8-7 21-10-5z" fill="#d8a07b"/>
<path d="M434 66l16-9 8 10-10 7z" fill="#3a466c"/>
<!-- lower forearm -->
<path d="M352 100L361 101 408 111.500 440 110 488 90.600 517.800 122 503.900 118.500 470 122 442.800 121 397.500 122 372 116Z" fill="url(#p2skin)"/>
<!-- plaid torso + sleeve -->
<path d="M505.600 0H565.500L563.500 52 561 104 556.500 122 541 130.500 526.500 131 517.800 122 488.200 90.600 487.500 83.700 494 76 505.600 72 503.900 52.300Z" fill="url(#p2plaid)"/>
<path d="M505.600 73.200L488.200 83.700V90.600L517.800 122 526.500 129.800" stroke="#1f2742" stroke-width="1.600" fill="none" opacity=".7"/>
<!-- right orange sliver -->
<path d="M565.500 0H571V170L556.500 122 561 104 563.500 52Z" fill="#fb5f12"/>
<!-- reflective strips -->
<path d="M491.600 120L547.400 136 571 104V120L549 150 489 130Z" fill="#e2ddd6"/>
<path d="M434 160.300L446.300 162 530 183 571 171V193.400L526.500 204 434 183Z" fill="#d8d8d3"/>
<path d="M434 160.300l12.300 1.700-6 23-7.300-2z" fill="#9fa3a6"/><path d="M530 183l3.500.5-5 21-3-.5z" fill="#b5b5b0"/>
<path d="M446 86h6.500v19H446z" fill="#f1ede7"/><path d="M452.500 92h14l-2 10h-12z" fill="#cfd3d8"/>
<!-- clipboard -->
<path d="M289.500 77.500L296 75 446 101.500 442.800 106 420 108 291.500 82.500Z" fill="#2c497c"/>
<path d="M291.500 76.500L298 74 444 100 440 103Z" fill="#eef0f2"/>
<path d="M293 75l20 1 2 5-20-2z" fill="#b9bec6"/>
<path d="M382.700 46.200l2.800.8-6.400 37-2.500-.5z" fill="#f3f3f1"/>
</g>
</svg></div>
<div id="ph3" class="ph" style="left:635px;top:1156px;height:228px;background:#4a4a80"><svg width="571" height="228" viewBox="0 0 571 228" preserveAspectRatio="none">
<defs>
<linearGradient id="p3a" x1="0" y1="0" x2="1" y2=".5"><stop offset="0" stop-color="#2b3582"/><stop offset=".45" stop-color="#414ea3"/><stop offset="1" stop-color="#384491"/></linearGradient>
<linearGradient id="p3c" x1="0" y1="0" x2="1" y2=".6"><stop offset="0" stop-color="#5b4f8e"/><stop offset=".5" stop-color="#4a4a98"/><stop offset="1" stop-color="#3f4a9c"/></linearGradient>
<filter id="p3f"><feGaussianBlur stdDeviation=".7"/></filter>
<filter id="p3g"><feGaussianBlur stdDeviation="1.600"/></filter>
</defs>
<rect width="571" height="228" fill="#3b3a5e"/>
<g filter="url(#p3f)">
<!-- ===== LEFT: big diagonal highway ===== -->
<!-- upper blue band (between rail and upper edge) -->
<path d="M0 0H141L300 84H200L20.600 .600 0 -6Z" fill="url(#p3a)"/>
<path d="M0 0H26L0 12Z" fill="#252e78"/>
<!-- lower blue/purple band (below rail) -->
<path d="M0 0L20.600 .600 200 84H110L0 34Z" fill="url(#p3c)"/>
<path d="M0 14L50 36 30 40 0 30Z" fill="#8a6a9c" opacity=".55"/>
<!-- dark gritty gap -->
<path d="M0 34L110 84H92L0 44Z" fill="#2a242c"/>
<path d="M0 36L104 84" stroke="#5a4a3a" stroke-width="2" stroke-dasharray="1 1.500" fill="none"/>
<!-- lower-left purple-brown band -->
<path d="M0 44L92 84H0Z" fill="#584862"/>
<path d="M0 64L40 84H0Z" fill="#6b5876"/>
<!-- edge lines (cream dotted) -->
<g stroke="#eadfd2" stroke-width="1.500" stroke-dasharray="1.100 1.200" fill="none">
<path d="M106 .500L280 84"/><path d="M141 .600L300 84" opacity=".55"/><path d="M0 32L112 84"/><path d="M0 45L90 84"/><path d="M0 62L44 84" opacity=".8"/>
</g>
<!-- central bright comb rail -->
<path d="M20.600 .600L200 84" stroke="#cfd2f4" stroke-width="3.600" stroke-dasharray="1.100 1.100" fill="none"/>
<!-- thin lane dashes -->
<g stroke="#c9cdf0" stroke-width="1" stroke-dasharray="1 1.400" fill="none" opacity=".9"><path d="M36 24L60 35M8 20L46 38M94 52L118 63M166 54L196 68M112 17L150 34M18 60L54 76M222 72L244 82"/></g>
<!-- light streaks -->
<g filter="url(#p3g)">
<path d="M70 12l20 9" stroke="#c070dc" stroke-width="5.500" stroke-linecap="round"/>
<path d="M58 6l14 6" stroke="#9a6ad0" stroke-width="3" stroke-linecap="round"/>
<path d="M118 24l30 12" stroke="#d0d0ee" stroke-width="5" stroke-linecap="round"/>
<path d="M134 44l30 14" stroke="#c5c8ee" stroke-width="7" stroke-linecap="round"/>
<path d="M101 48l24 9" stroke="#c9c2e6" stroke-width="5" stroke-linecap="round"/>
<path d="M192 72l22 10" stroke="#7f9ae6" stroke-width="6" stroke-linecap="round"/>
<path d="M10 20l30 12" stroke="#d4b9dc" stroke-width="3"/>
<path d="M16 64l34 13" stroke="#bdb0d4" stroke-width="3"/>
<path d="M128 74l22 8" stroke="#8d86b8" stroke-width="5" stroke-linecap="round"/>
</g>
<!-- ===== purple-brown road center-top ===== -->
<path d="M141 0H204Q250 30 262 84H300Z" fill="#4a3f52"/>
<path d="M141 0H168L300 84 280 84Z" fill="#3c4a9a" opacity=".5"/>
<path d="M128 0h12l5 5-9-1z" fill="#6a8ae0"/>
<path d="M170 0H206Q250 30 263 84H244Q226 34 170 0Z" fill="#574b63"/>
<path d="M170 0Q228 36 246 84M206 0Q250 30 263 84" stroke="#e3d6c8" stroke-width="1.200" stroke-dasharray="1.200 1.300" fill="none"/>
<g stroke="#f0ece4" stroke-width="1.300"><path d="M184 5l4 4M199 20l3 5M212 38l3 5"/></g>
<!-- center dark ground -->
<path d="M206 0H300L288 84H263Q250 30 206 0Z" fill="#372a24"/>
<path d="M214 0H296L292 18Q252 8 232 14Z" fill="#3e2733"/>
<path d="M226 12Q262 2 294 16" stroke="#3550b8" stroke-width="1.600" fill="none" stroke-dasharray="1.500 1"/>
<path d="M236 40l34 8 14 32h-20z" fill="#5e532c"/><path d="M254 54l22 6 4 22h-12z" fill="#45402f"/>
<path d="M240 26l40 12-4 12-30-6z" fill="#4a3a44"/>
<!-- ===== RIGHT ===== -->
<!-- vertical road -->
<path d="M292 0H334Q318 40 322 84H284Q282 40 292 0Z" fill="#484476"/>
<path d="M292 0Q282 40 284 84M334 0Q318 40 322 84" stroke="#e9dfd3" stroke-width="1.400" stroke-dasharray="1.200 1.300" fill="none"/>
<path d="M286 36h22" stroke="#9a8a9a" stroke-width="2" opacity=".7"/>
<g filter="url(#p3g)"><path d="M319 18Q312 36 311 54" stroke="#dcae48" stroke-width="3.600" fill="none" stroke-linecap="round"/>
<path d="M311 44Q304 64 304 84" stroke="#5a72e0" stroke-width="5" fill="none"/></g>
<g stroke="#f0ecf6" stroke-width="1.200"><path d="M313 3v4M308 22v5M300 52v5"/></g>
<!-- fan of streaks -->
<path d="M334 0H440L322 70Z" fill="#5a4f74"/>
<g filter="url(#p3g)">
<path d="M336 44L392 0" stroke="#b4acdc" stroke-width="6"/>
<path d="M340 56L420 0" stroke="#8e84ba" stroke-width="5"/>
<path d="M358 52L430 2" stroke="#6d5a86" stroke-width="6"/>
<path d="M392 26L424 2" stroke="#ecdcec" stroke-width="10"/>
<path d="M412 16L426 6" stroke="#5d90de" stroke-width="5"/>
<path d="M344 30L376 2" stroke="#cfc8ee" stroke-width="3"/>
<path d="M334 62L352 48" stroke="#c8b04a" stroke-width="4"/>
<path d="M386 34L398 26" stroke="#b85a78" stroke-width="4"/>
</g>
<!-- big road -->
<path d="M320 69L440 18 492 .500H524L366 84H320Z" fill="#47436f"/>
<path d="M320 69L440 18 492 .500M366 84L503 7 524 0" stroke="#e9dfd3" stroke-width="1.400" stroke-dasharray="1.200 1.300" fill="none"/>
<g stroke="#efeaf4" stroke-width="1.300"><path d="M372 64l12-5M404 50l10-4M436 36l8-4M454 18l6-3M380 48l14-5"/></g>
<path d="M362 54v30" stroke="#8a7f9a" stroke-width="1.600" opacity=".8"/>
<path d="M320 70L366 84H320Z" fill="#5a4c58"/>
<!-- olive/gray bands under road -->
<path d="M366 84L503 7 512 10 400 84Z" fill="#5d574c"/>
<path d="M400 84L512 10 520 16 430 84Z" fill="#3b3a48"/>
<path d="M430 84L520 16 526 20 452 84Z" fill="#6a6068"/>
<path d="M476 18l12-8 4 6-10 8z" fill="#9a963c"/>
<path d="M440 52l10-6M426 66l12-6" stroke="#d9d4e4" stroke-width="2"/>
<!-- dark navy -->
<path d="M524 0L452 84H571V0Z" fill="#0b1329"/>
<path d="M508 30q-10 12 0 26t-16 28" stroke="#34426e" stroke-width="3" fill="none" opacity=".8"/>
<path d="M478 60q6 10-4 24" stroke="#5a5a80" stroke-width="3" fill="none" opacity=".7"/>
<g filter="url(#p3g)"><path d="M522 30l20-6" stroke="#b8a8ba" stroke-width="4" stroke-linecap="round"/></g>
<!-- far right road -->
<path d="M546 0Q540 40 560 84H571V0Z" fill="#4a4274"/>
<path d="M546 0Q540 40 560 84" stroke="#e9dfd3" stroke-width="1.500" stroke-dasharray="1.200 1.300" fill="none"/>
<g stroke="#f0ecf6" stroke-width="1.400"><path d="M558 8v6M561 28v6M565 50v5"/></g>
</g>
</svg></div>
<div id="ph4" class="ph" style="left:1270px;top:1156px;height:228px;background:#8a9a9a"><svg width="571" height="228" viewBox="0 0 571 228" preserveAspectRatio="none">
<defs>
<linearGradient id="p4s" x1="0" y1="0" x2="1" y2="0"><stop offset="0" stop-color="#53656a"/><stop offset=".3" stop-color="#62757a"/><stop offset=".5" stop-color="#8f9f9f"/><stop offset=".7" stop-color="#b7bfb9"/><stop offset=".85" stop-color="#9aaaa8"/><stop offset="1" stop-color="#85989a"/></linearGradient>
<filter id="p4c"><feGaussianBlur stdDeviation="7"/></filter>
<filter id="p4d"><feGaussianBlur stdDeviation="3"/></filter>
<filter id="p4e"><feGaussianBlur stdDeviation=".5"/></filter>
</defs>
<rect width="571" height="228" fill="url(#p4s)"/>
<g filter="url(#p4c)">
<ellipse cx="60" cy="20" rx="90" ry="40" fill="#4f6166"/>
<ellipse cx="150" cy="70" rx="70" ry="18" fill="#66797d"/>
<ellipse cx="215" cy="24" rx="36" ry="22" fill="#a9b5b3"/>
<ellipse cx="300" cy="14" rx="54" ry="18" fill="#dcdfd8"/>
<ellipse cx="250" cy="62" rx="40" ry="22" fill="#c9cfc9"/>
<ellipse cx="330" cy="70" rx="60" ry="22" fill="#ece8dc"/>
<ellipse cx="395" cy="28" rx="40" ry="20" fill="#cdd3cd"/>
<ellipse cx="440" cy="66" rx="46" ry="22" fill="#f0e9dc"/>
<ellipse cx="510" cy="30" rx="44" ry="26" fill="#8fa09f"/>
<ellipse cx="560" cy="56" rx="30" ry="24" fill="#a5b2af"/>
<ellipse cx="100" cy="86" rx="30" ry="8" fill="#a9b4b1"/>
<ellipse cx="483" cy="19" rx="12" ry="10" fill="#8fc2b4"/><ellipse cx="530" cy="8" rx="50" ry="14" fill="#7b9092"/><ellipse cx="540" cy="78" rx="40" ry="14" fill="#cfcec2"/><ellipse cx="430" cy="20" rx="14" ry="16" fill="#9aa8a5"/>
</g>
<g filter="url(#p4d)" opacity=".8">
<ellipse cx="200" cy="34" rx="14" ry="10" fill="#c4ccc8"/><ellipse cx="180" cy="12" rx="16" ry="7" fill="#8d9c9d"/><ellipse cx="262" cy="30" rx="16" ry="10" fill="#e2e4dd"/><ellipse cx="226" cy="52" rx="18" ry="8" fill="#d3d8d2"/><ellipse cx="350" cy="36" rx="18" ry="10" fill="#e4e5dd"/>
</g>
<g filter="url(#p4e)">
<!-- wires -->
<path d="M0 75Q250 50 416 23L446 19.500" stroke="#111416" stroke-width="1.800" fill="none"/>
<path d="M264 84L286 81 351 68" stroke="#111416" stroke-width="1.600" fill="none"/>
<path d="M463 1L571 21.700" stroke="#14181a" stroke-width="1.800" fill="none"/>
<path d="M462 28L571 84" stroke="#14181a" stroke-width="1.800" fill="none"/>
<path d="M441.600 67L480.500 84M446 75L468 84" stroke="#1a1e20" stroke-width="1.800"/>
<!-- pole -->
<rect x="416.400" y="0" width="5.300" height="60" fill="#14181a"/>
<!-- insulator + arm -->
<path d="M452 0h11.400l.8 6-1.200 5 1 5-1.600 6h-9l-1.400-6 1-5-1.200-5z" fill="#15191b"/>
<path d="M439 23.500L462 21 459 38 444 60 423 60 430 44 438 30Z" fill="#191d1f"/>

<!-- transformer -->
<path d="M410.700 55l8-3 14 0 8 3 0 29h-30z" fill="#171b1d"/>
<path d="M441 70h12v14h-12z" fill="#1b1f21"/>
<!-- man -->
<path d="M357.500 36q-.5-9 8.500-10.500 9 0 10 8l2 2.600-6.500 1q2.500 6-1 10l-9 1q-5-4-4-12z" fill="#14181a"/>
<path d="M353.500 57q1-7 9-10l10 1 8 8 14-3 16 1 2 4-16 5-8 5 2 16h-36.500z" fill="#15191b"/>
<path d="M384 66l14-8 3 3-13 10z" fill="#cfd0c6"/>
<path d="M380 76l12-2 1 5-12 5z" fill="#1b1f21"/><path d="M384 80l10 0-2 4h-9z" fill="#d5d6cc"/>
</g>
</svg></div>

<!-- card 1 text -->
<span id="tx_d1a" class="t d" style="left:634.70px;top:770.80px;letter-spacing:0.316px">Easy-to-use cloud solution for quickly and accurately calculating the flatness</span>
<span id="tx_d1b" class="t d" style="left:635.70px;top:793.91px;letter-spacing:0.326px">of concrete floors required for robotic warehouses</span>
<span id="tx_c1ab" class="t d b" style="left:635.70px;top:862.61px;letter-spacing:-0.100px">100 credits</span>
<span id="tx_c1ar" class="t d" style="left:723.70px;top:862.61px;letter-spacing:0.340px">(with a subscription)</span>
<span id="tx_c1bb" class="t d b" style="left:635.70px;top:885.61px;letter-spacing:0.200px">200 credits</span>
<span id="tx_c1br" class="t d" style="left:726.90px;top:885.61px;letter-spacing:0.364px">(without a subscription)</span>
<div class="badge" style="left:635px;top:927px;width:169px"></div>
<span id="tx_bd1" class="t" style="left:647.80px;top:931.80px;font-size:15.4px;color:#5b34b8;letter-spacing:0.510px;-webkit-text-stroke:.18px #5b34b8">Free Trial available!</span>
<div class="btn" style="left:635px;top:975px;width:104px;height:42px;background:#1d4ed8"></div>
<span id="tx_st1" class="t" style="left:650.20px;top:988.61px;font-size:15.6px;font-weight:700;color:#fff;letter-spacing:0.200px">Start Trial</span>
<div class="btn" style="left:755px;top:974px;width:112px;height:44px;border:1.5px solid #3549ad;border-top-color:#27335f;background:#fff"></div>
<span id="tx_rm1" class="t" style="left:771.50px;top:988.61px;font-size:15.6px;color:#3f51c4;letter-spacing:0.422px;-webkit-text-stroke:.25px #3f51c4">Run Model</span>
<div class="btn" style="left:883px;top:974px;width:85px;height:44px;border:1px solid #e5e7eb;background:#fff"></div>
<span id="tx_dt1" class="t" style="left:900.80px;top:988.61px;font-size:15.6px;color:#1f2937;-webkit-text-stroke:.3px #1f2937;letter-spacing:0.401px">Details</span>

<!-- card 2 text -->
<span id="tx_d2a" class="t d" style="left:1269.70px;top:770.80px;letter-spacing:0.300px">Maintain safety and compliance standards on construction sites with our</span>
<span id="tx_d2b" class="t d" style="left:1269.70px;top:793.91px;letter-spacing:0.336px">ready-to-run computer vision model designed to automatically detect and</span>
<span id="tx_d2c" class="t d" style="left:1270.70px;top:817.91px;letter-spacing:0.000px">classify PPE.</span>
<span id="tx_c2ab" class="t d b" style="left:1270.70px;top:862.61px;letter-spacing:0.180px">40 credits</span>
<span id="tx_c2ar" class="t d" style="left:1352.50px;top:862.61px;letter-spacing:0.340px">(with a subscription)</span>
<span id="tx_c2bb" class="t d b" style="left:1270.70px;top:885.61px;letter-spacing:0.066px">80 credits</span>
<span id="tx_c2br" class="t d" style="left:1352.50px;top:885.61px;letter-spacing:0.364px">(without a subscription)</span>
<div class="badge" style="left:1270px;top:927px;width:169px"></div>
<span id="tx_bd2" class="t" style="left:1282.80px;top:931.80px;font-size:15.4px;color:#5b34b8;letter-spacing:0.510px;-webkit-text-stroke:.18px #5b34b8">Free Trial available!</span>
<div class="btn" style="left:1270px;top:975px;width:104px;height:42px;background:#1d4ed8"></div>
<span id="tx_st2" class="t" style="left:1285.20px;top:988.61px;font-size:15.6px;font-weight:700;color:#fff;letter-spacing:0.200px">Start Trial</span>
<div class="btn" style="left:1390px;top:974px;width:112px;height:44px;border:1.5px solid #3549ad;border-top-color:#27335f;background:#fff"></div>
<span id="tx_rm2" class="t" style="left:1406.50px;top:988.61px;font-size:15.6px;color:#3f51c4;letter-spacing:0.428px;-webkit-text-stroke:.25px #3f51c4">Run Model</span>
<div class="btn" style="left:1518px;top:974px;width:85px;height:44px;border:1px solid #e5e7eb;background:#fff"></div>
<span id="tx_dt2" class="t" style="left:1535.80px;top:988.61px;font-size:15.6px;color:#1f2937;-webkit-text-stroke:.3px #1f2937;letter-spacing:0.401px">Details</span>

</div></div>
</body>
</html>
